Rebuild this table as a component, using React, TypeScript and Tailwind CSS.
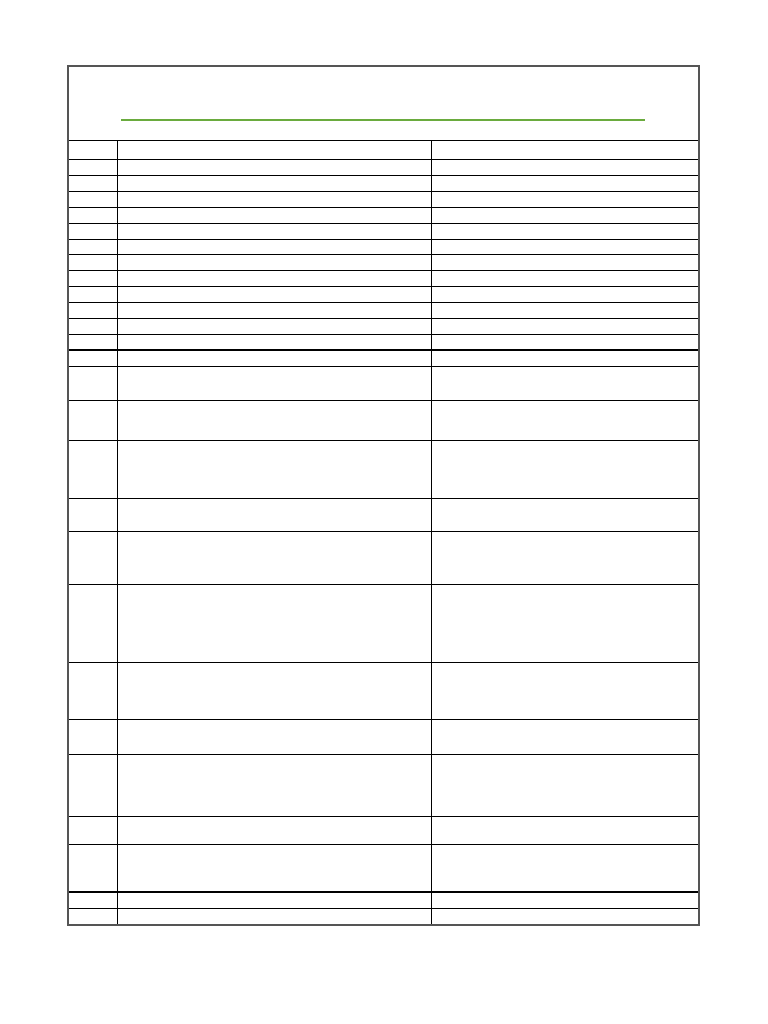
const rowLines = [
  140, 159, 175, 191, 207, 223, 239, 254, 270, 286, 302, 318, 334, 350, 366,
  400, 440, 498, 531, 584, 662, 719, 754, 816, 844, 892, 908, 925,
];

// lines drawn heavier in the sheet
const thick = new Set([350, 892]);

export default function App() {
  const rows = rowLines.slice(1).map((end, i) => ({
    end,
    height: end - rowLines[i],
    last: i === rowLines.length - 2,
  }));

  return (
    <div className="min-h-screen bg-white pt-[65px]">
      <div className="ml-[67px] w-[633px] border-2 border-[#555555] bg-white">
        {/* title block */}
        <div className="h-[74px] border-b border-black pl-[52px] pt-[52px]">
          <div className="h-[2px] w-[524px] bg-[#6aab3e]" />
        </div>

        {rows.map((row) => (
          <div
            key={row.end}
            className={
              row.last
                ? "grid h-[15px] grid-cols-[49px_314px_1fr]"
                : thick.has(row.end)
                  ? "grid grid-cols-[49px_314px_1fr] border-b-2 border-black"
                  : "grid grid-cols-[49px_314px_1fr] border-b border-black"
            }
            style={row.last ? undefined : { height: row.height }}
          >
            <div className="border-r border-black" />
            <div className="border-r border-black" />
            <div />
          </div>
        ))}
      </div>
    </div>
  );
}
